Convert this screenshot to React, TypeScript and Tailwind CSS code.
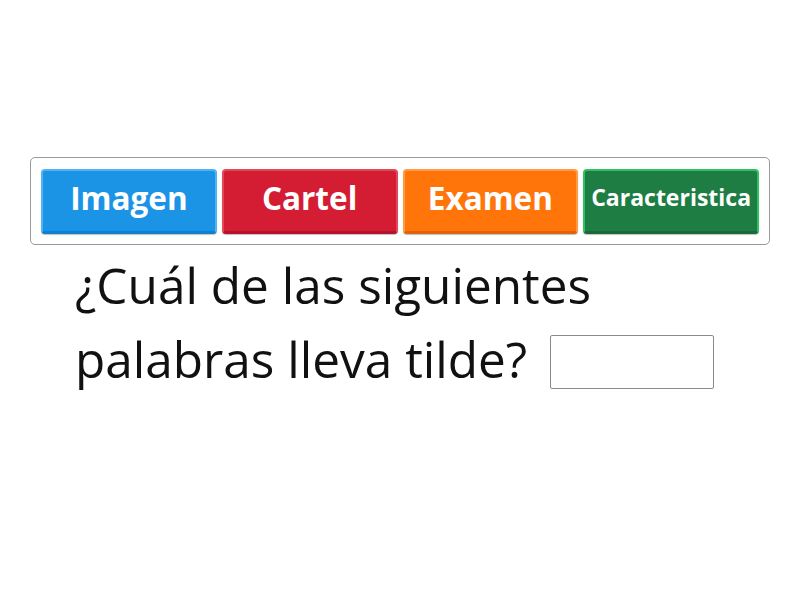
const tiles = [
  { label: 'Imagen', cls: 'bg-[#1b94e6] border-[#52b3f2] border-b-[#0f7fcf] text-[31.5px]' },
  { label: 'Cartel', cls: 'bg-[#d41c33] border-[#e3475a] border-b-[#b5132a] text-[31.5px]' },
  { label: 'Examen', cls: 'bg-[#ff750a] border-[#ff9a45] border-b-[#e0620a] text-[31.5px]' },
  { label: 'Caracteristica', cls: 'bg-[#1e7d43] border-[#2fc063] border-b-[#186a38] text-[23px]' },
]

export default function App() {
  return (
    <div className="w-[800px] h-[600px] bg-white font-['Open_Sans',sans-serif] pt-[157px]">
      <div className="mx-[30px] h-[88px] border border-[#9a9a9a] rounded-[5px] px-[10px] pt-[11px] flex gap-[5px]">
        {tiles.map(t => (
          <div
            key={t.label}
            className={`flex-1 h-[65px] rounded-[4px] border-2 border-b-[3px] flex items-center justify-center pb-[7px] text-white font-bold leading-none whitespace-nowrap shadow-[0_1px_1px_rgba(0,0,0,0.25)] ${t.cls}`}
          >
            {t.label}
          </div>
        ))}
      </div>
      <div className="pl-[75px] pt-[3px] text-[49.5px] leading-[74px] text-[#111] w-[760px]">
        <div>¿Cuál de las siguientes</div>
        <div className="flex">
          <span>palabras lleva tilde?</span>
          <span className="ml-[23px] mt-[13px] w-[164px] h-[54px] border border-[#8a8a8a] rounded-[2px]" />
        </div>
      </div>
    </div>
  )
}
